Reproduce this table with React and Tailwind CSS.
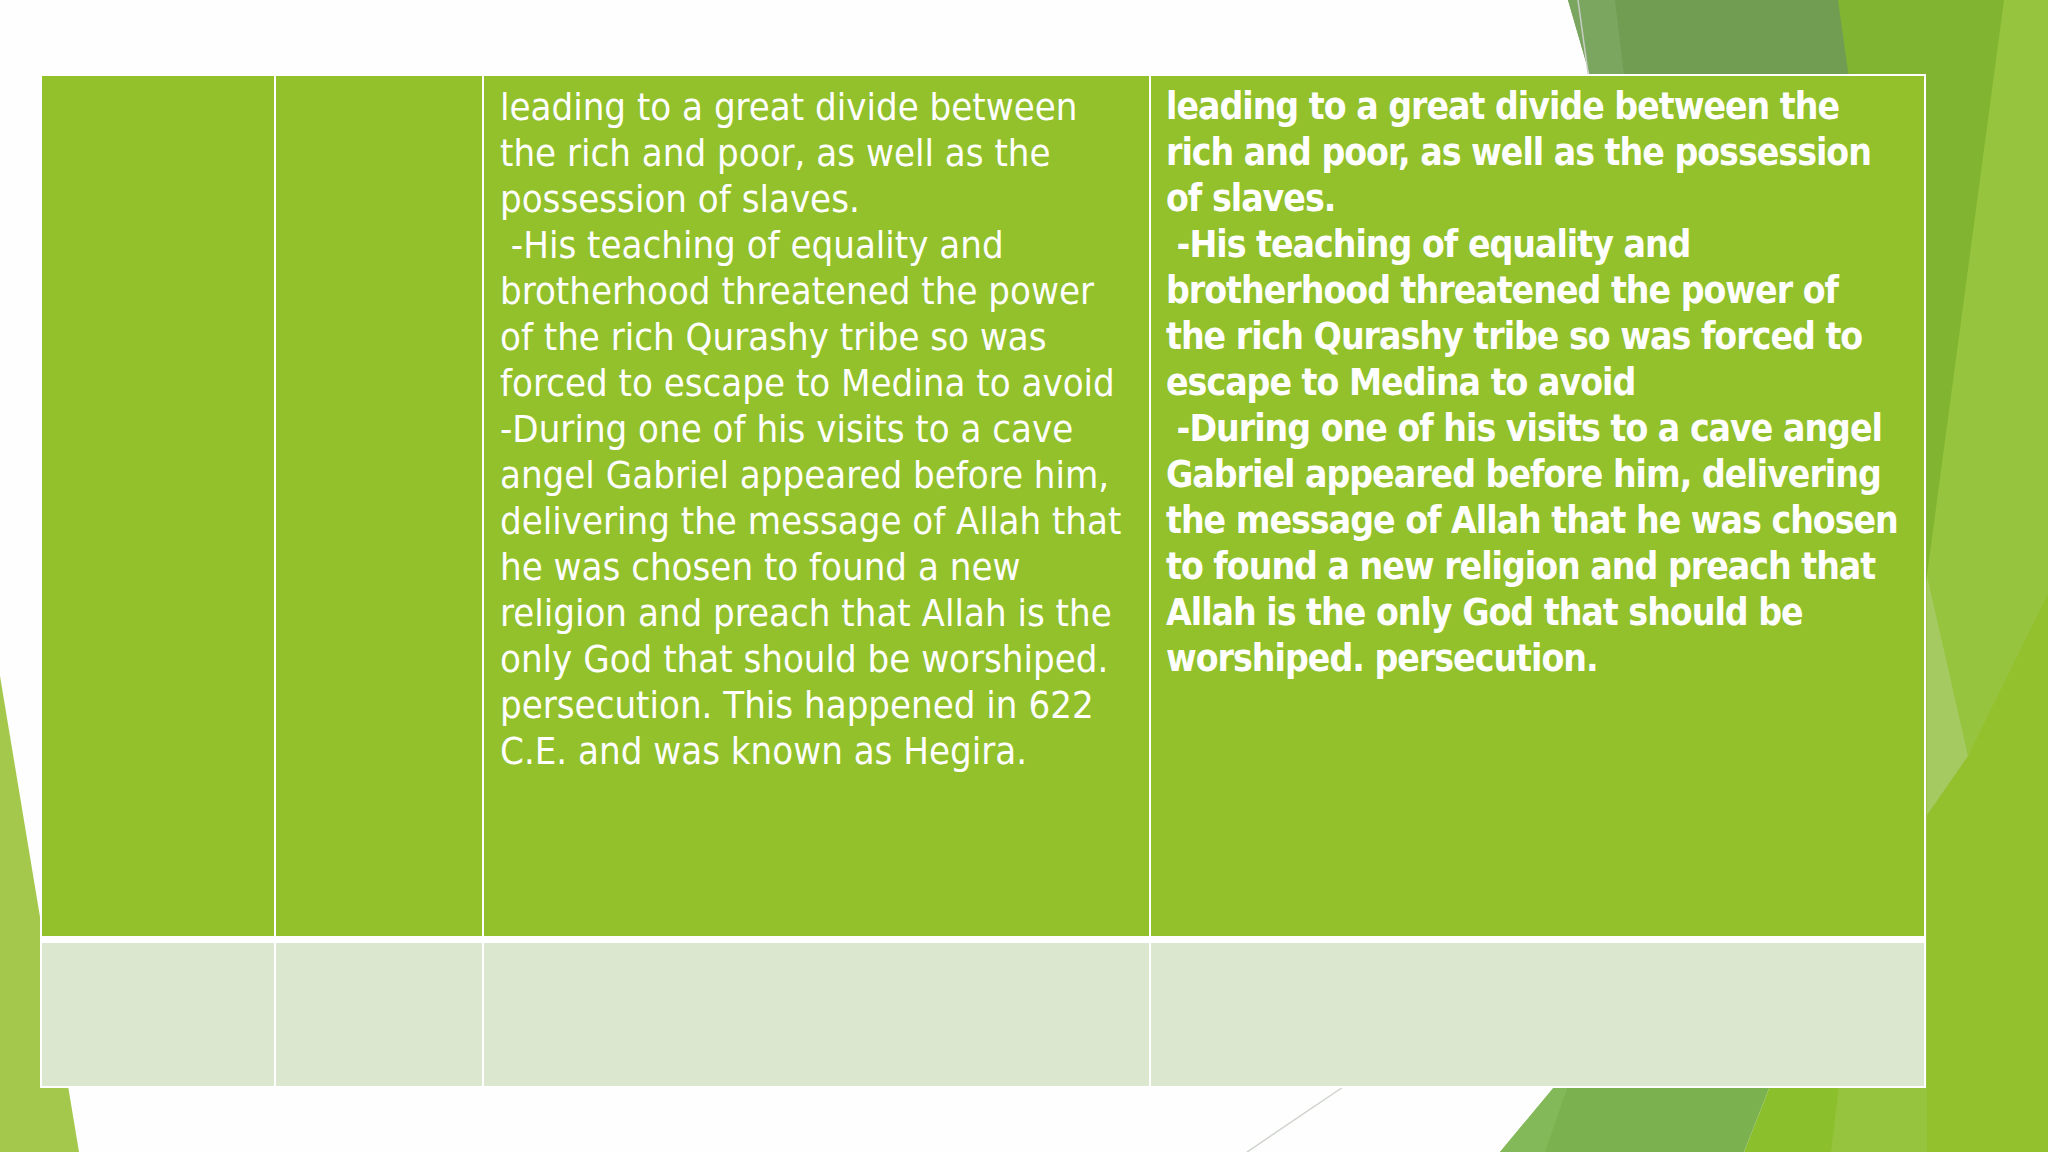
const regularLines = [
  'leading to a great divide between',
  'the rich and poor, as well as the',
  'possession of slaves.',
  ' -His teaching of equality and',
  'brotherhood threatened the power',
  'of the rich Qurashy tribe so was',
  'forced to escape to Medina to avoid',
  '-During one of his visits to a cave',
  'angel Gabriel appeared before him,',
  'delivering the message of Allah that',
  'he was chosen to found a new',
  'religion and preach that Allah is the',
  'only God that should be worshiped.',
  'persecution. This happened in 622',
  'C.E. and was known as Hegira.',
];

const boldLines = [
  'leading to a great divide between the',
  'rich and poor, as well as the possession',
  'of slaves.',
  ' -His teaching of equality and',
  'brotherhood threatened the power of',
  'the rich Qurashy tribe so was forced to',
  'escape to Medina to avoid',
  ' -During one of his visits to a cave angel',
  'Gabriel appeared before him, delivering',
  'the message of Allah that he was chosen',
  'to found a new religion and preach that',
  'Allah is the only God that should be',
  'worshiped. persecution.',
];

function Backdrop() {
  return (
    <svg className="absolute inset-0" width="2048" height="1152" viewBox="0 0 2048 1152">
      {/* right side strips */}
      <polygon points="1830,0 2048,0 2048,1152 1830,1152" fill="#97c43e" />
      <polygon points="1968,756 2048,594 2048,1152 1927,1152 1927,815" fill="#92c12d" />
      <polygon points="1927,576 1968,756 1927,815" fill="#a5ca62" />
      <polygon points="1838,0 2004,0 1921,620 1850,620" fill="#80b431" />
      <polygon points="1568,0 1838,0 1852,100 1597,100" fill="#719d53" />
      <polygon points="1568,0 1615,0 1627,100 1597,100" fill="#7aa660" />
      <line x1="1578" y1="0" x2="1589" y2="80" stroke="#c9cec4" strokeWidth="1.5" />
      {/* bottom strips */}
      <polygon points="1744,1152 1770,1086 1839,1086 1831,1152" fill="#8bbf2c" />
      <polygon points="1500,1152 1555,1086 1770,1086 1744,1152" fill="#7bb24f" />
      <polygon points="1500,1152 1555,1086 1568,1086 1545,1152" fill="#84b95a" />
      <line x1="1247" y1="1152" x2="1343" y2="1087" stroke="#cfd3cc" strokeWidth="1.5" />
      {/* left strip */}
      <polygon points="0,676 79,1152 0,1152" fill="#a3c84b" />
    </svg>
  );
}

function TextCell({ lines, bold }) {
  return (
    <div className={`bg-[#92c12b] pt-[8px] leading-[46px] text-white ${bold ? 'pl-[15px] text-[37px] font-bold tracking-[-1px]' : 'pl-[16px] text-[38px]'}`}>
      {lines.map((line, i) => (
        <div key={i} className="whitespace-pre">{line}</div>
      ))}
    </div>
  );
}

export default function App() {
  return (
    <div className="relative h-[1152px] w-[2048px] overflow-hidden bg-[#fdfefd] font-['DejaVu_Sans_Condensed','DejaVu_Sans',sans-serif] font-stretch-condensed">
      <Backdrop />
      <div className="relative pl-[40px] pt-[74px]">
        <div className="grid w-fit grid-cols-[232px_206px_665px_773px] grid-rows-[860px_143px] gap-x-[2px] gap-y-[7px] border-2 border-white bg-white">
          <div className="bg-[#92c12b]" />
          <div className="bg-[#92c12b]" />
          <TextCell lines={regularLines} />
          <TextCell lines={boldLines} bold />
          <div className="bg-[#dce7cf]" />
          <div className="bg-[#dce7cf]" />
          <div className="bg-[#dce7cf]" />
          <div className="bg-[#dce7cf]" />
        </div>
      </div>
    </div>
  );
}
